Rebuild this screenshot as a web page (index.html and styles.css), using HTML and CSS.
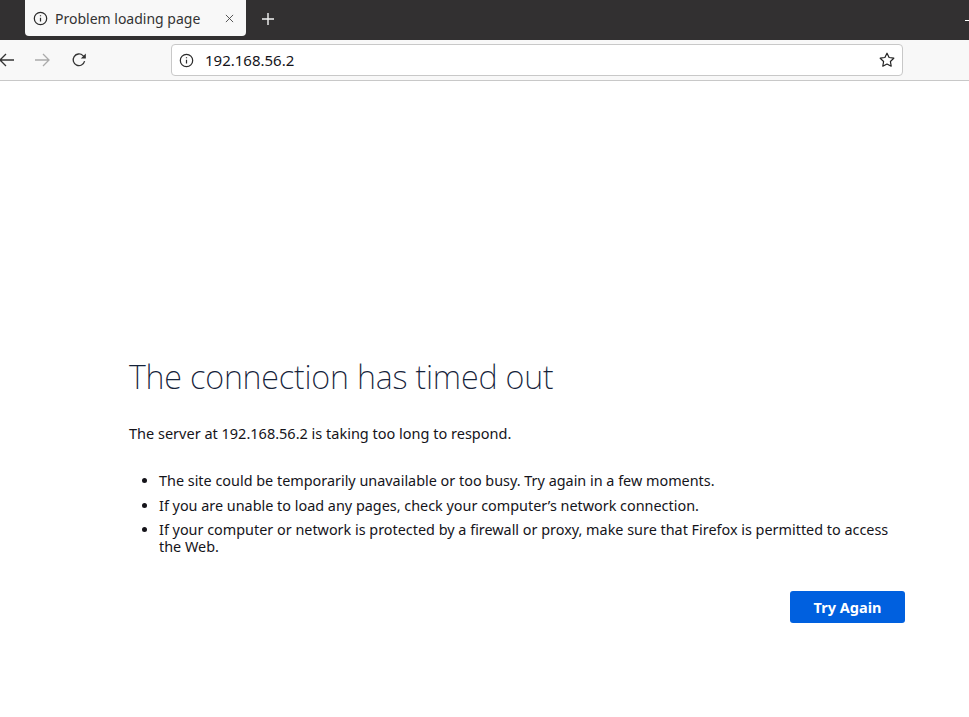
FILE: index.html
```html
<!DOCTYPE html>
<html lang="en">
<head>
<meta charset="utf-8">
<title>Problem loading page</title>
<link rel="stylesheet" href="styles.css">
</head>
<body>
<header class="tabbar">
  <div class="tab">
    <svg class="ico tab-info" viewBox="0 0 16 16"><circle cx="8" cy="8" r="6.6"/><path d="M8 7.2v4M8 4.4v1.2"/></svg>
    <span class="tab-title">Problem loading page</span>
    <svg class="tab-close" viewBox="0 0 10 10"><path d="M1 1l8 8M9 1l-8 8"/></svg>
  </div>
  <svg class="new-tab" viewBox="0 0 12 12"><path d="M6 0v12M0 6h12"/></svg>
  <span class="win-min"></span>
</header>
<nav class="toolbar">
  <svg class="nav back" viewBox="0 0 16 16"><path d="M15 8H1M7 2L1 8l6 6"/></svg>
  <svg class="nav forward" viewBox="0 0 16 16"><path d="M1 8h14M9 2l6 6-6 6"/></svg>
  <svg class="nav reload" viewBox="0 0 16 16"><path d="M13.6 9.200A5.800 5.800 0 1 1 12 3.600L14 5.600"/><path class="solid" d="M14.800 1.600v5h-5z"/></svg>
  <div class="urlbar">
    <svg class="ico url-info" viewBox="0 0 16 16"><circle cx="8" cy="8" r="6.6"/><path d="M8 7.2v4M8 4.4v1.2"/></svg>
    <span class="url">192.168.56.2</span>
    <svg class="star" viewBox="0 0 16 16"><path d="M8 1.2l2.1 4.3 4.7.7-3.4 3.3.8 4.7L8 12l-4.2 2.2.8-4.7L1.200 6.200l4.700-.7z"/></svg>
  </div>
</nav>
<main class="page">
  <h1>The connection has timed out</h1>
  <p class="desc">The server at 192.168.56.2 is taking too long to respond.</p>
  <ul>
    <li>The site could be temporarily unavailable or too busy. Try again in a few moments.</li>
    <li>If you are unable to load any pages, check your computer’s network connection.</li>
    <li>If your computer or network is protected by a firewall or proxy, make sure that Firefox is permitted to access the Web.</li>
  </ul>
  <div class="actions"><button class="retry">Try Again</button></div>
</main>
</body>
</html>
```
FILE: styles.css
```css
* { box-sizing: border-box; }
html, body { margin: 0; height: 100%; overflow: hidden; background: #fff; }
body { font-family: "Noto Sans", "Open Sans", sans-serif; color: #15141a; }
svg { display: block; fill: none; flex: none; }

.tabbar { height: 40px; background: #323031; display: flex; align-items: flex-start; padding-left: 25px; position: relative; }
.tab { width: 221px; height: 36px; background: #f8f8f8; border-radius: 0 0 4px 4px; display: flex; align-items: center; padding: 1px 12px 0 8px; }
.ico { stroke: #2b2b2b; stroke-width: 1.3; width: 15px; height: 15px; }
.tab-title { margin-left: 7px; font-size: 14px; color: #333; flex: 1; white-space: nowrap; }
.tab-close { width: 9px; height: 9px; stroke: #444; stroke-width: 1; }
.new-tab { width: 12px; height: 12px; margin: 13px 0 0 16px; stroke: #f4f4f4; stroke-width: 1.4; }
.win-min { position: absolute; right: 0; top: 20px; width: 4px; height: 1px; background: #fff; }

.toolbar { height: 41px; background: #f8f8f8; border-bottom: 1px solid #c8c8c8; display: flex; align-items: center; }
.nav { width: 16px; height: 16px; stroke: #333; stroke-width: 1.3; }
.back { margin-left: -1px; }
.forward { margin-left: 19px; stroke: #ababab; }
.reload { margin-left: 21px; }
.reload .solid { fill: #333; stroke: none; }
.urlbar { width: 732px; height: 32px; margin-left: 84px; background: #fff; border: 1px solid #c8c8c8; border-radius: 4px; display: flex; align-items: center; padding: 0 7px; }
.url { margin-left: 11px; font-size: 15px; color: #15141a; flex: 1; }
.star { width: 16px; height: 16px; stroke: #222; stroke-width: 1.2; stroke-linejoin: round; }

.page { padding: 0 64px 0 129px; }
h1 { margin: 272px 0 0; font: 200 32.500px/48px "Noto Sans", sans-serif; color: #15233a; letter-spacing: -.2px; }
.desc { margin: 22px 0 0; font-size: 14.500px; line-height: 21px; }
ul { margin: 28px 0 0; padding: 0 6px 0 30px; font-size: 14.400px; line-height: 17px; }
li { margin-bottom: 8px; }
li:last-child { margin-top: -1px; }
.actions { display: flex; justify-content: flex-end; margin-top: 36px; }
.retry { width: 115px; height: 32px; border: 0; border-radius: 3px; background: #0060df; color: #fff; font: 700 14.500px "Noto Sans", sans-serif; padding: 0; }
```
